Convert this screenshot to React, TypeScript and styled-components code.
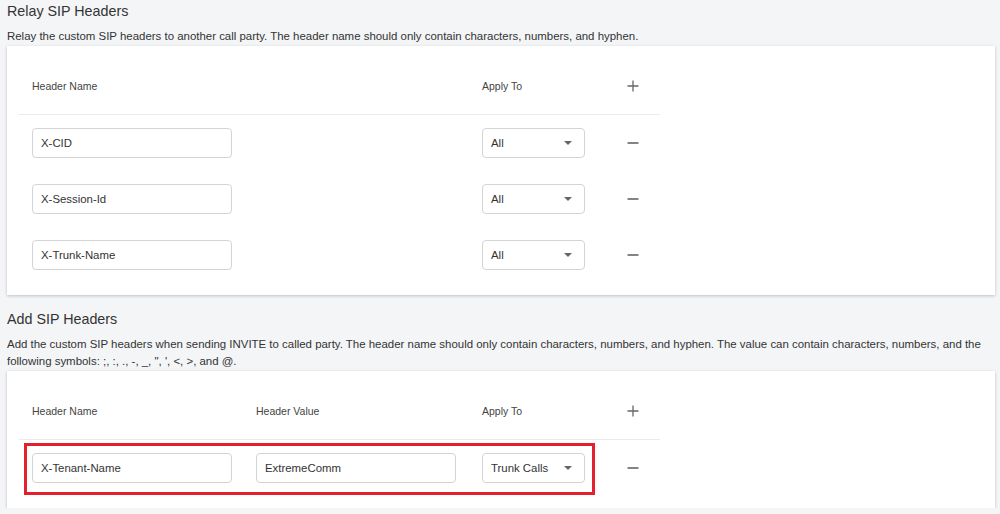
import styled, { createGlobalStyle } from 'styled-components';

const GlobalStyle = createGlobalStyle`
  body {
    margin: 0;
    background: #f4f5f7;
    font-family: "Liberation Sans", Arial, sans-serif;
    color: #333;
  }
`;

interface HeaderRow {
  name: string;
  value?: string;
  applyTo: string;
}

const relayRows: HeaderRow[] = [
  { name: 'X-CID', applyTo: 'All' },
  { name: 'X-Session-Id', applyTo: 'All' },
  { name: 'X-Trunk-Name', applyTo: 'All' },
];

const addRows: HeaderRow[] = [{ name: 'X-Tenant-Name', value: 'ExtremeComm', applyTo: 'Trunk Calls' }];

const PlusIcon = () => (
  <svg width="12" height="12" viewBox="0 0 12 12">
    <path d="M6 0.5v11M0.5 6h11" stroke="#666" strokeWidth="1.3" />
  </svg>
);

const MinusIcon = () => (
  <svg width="12" height="12" viewBox="0 0 12 12">
    <path d="M0.5 6h11" stroke="#666" strokeWidth="1.6" />
  </svg>
);

function HeaderTable({ rows, withValue, highlight }: { rows: HeaderRow[]; withValue?: boolean; highlight?: boolean }) {
  return (
    <Table>
      <HeadRow $withValue={withValue}>
        <ColLabel>Header Name</ColLabel>
        {withValue && <ColLabel>Header Value</ColLabel>}
        <ColLabel>Apply To</ColLabel>
        <Action>
          <PlusIcon />
        </Action>
      </HeadRow>
      {rows.map((row) => (
        <Row key={row.name} $withValue={withValue}>
          {highlight && <Highlight />}
          <Input>{row.name}</Input>
          {withValue && <Input>{row.value}</Input>}
          <Select>
            {row.applyTo}
            <Caret />
          </Select>
          <Action>
            <MinusIcon />
          </Action>
        </Row>
      ))}
    </Table>
  );
}

export default function App() {
  return (
    <>
      <GlobalStyle />
      <Page>
        <Section>
          <Title>Relay SIP Headers</Title>
          <Description>
            Relay the custom SIP headers to another call party. The header name should only contain characters,
            numbers, and hyphen.
          </Description>
          <Card>
            <HeaderTable rows={relayRows} />
          </Card>
        </Section>
        <Section $gap>
          <Title>Add SIP Headers</Title>
          <Description>
            Add the custom SIP headers when sending INVITE to called party. The header name should only contain
            characters, numbers, and hyphen. The value can contain characters, numbers, and the following symbols:
            ;, :, ., -, _, ", ', &lt;, &gt;, and @.
          </Description>
          <Card>
            <HeaderTable rows={addRows} withValue highlight />
          </Card>
        </Section>
      </Page>
    </>
  );
}

const Page = styled.div`
  padding: 0 5px 0 7px;
`;

const Section = styled.section<{ $gap?: boolean }>`
  margin-top: ${(p) => (p.$gap ? '13px' : '0')};
`;

const Title = styled.h2`
  margin: 0;
  font-size: 14.3px;
  font-weight: 400;
  line-height: 22px;
  color: #333;
`;

const Description = styled.p`
  margin: 6px 0 1px;
  font-size: 11.45px;
  line-height: 17px;
  color: #333;
`;

const Card = styled.div`
  background: #fff;
  box-shadow: 0 1px 3px rgba(0, 0, 0, 0.22);
  padding: 12px;
`;

const Table = styled.div`
  width: 641px;
`;

const Row = styled.div<{ $withValue?: boolean }>`
  position: relative;
  display: grid;
  grid-template-columns: ${(p) => (p.$withValue ? '224px 226px' : '450px')} 130px 42px;
  align-items: center;
  height: 56px;
  padding-left: 13px;
  box-sizing: border-box;
`;

const HeadRow = styled(Row)`
  height: 57px;
  border-bottom: 1px solid #ebebeb;
`;

const ColLabel = styled.div`
  font-size: 10.5px;
  color: #444;
`;

const Input = styled.div`
  width: 200px;
  height: 30px;
  box-sizing: border-box;
  border: 1px solid #d4d4d4;
  border-radius: 4px;
  padding: 0 8px;
  display: flex;
  align-items: center;
  font-size: 11.4px;
  color: #333;
`;

const Select = styled(Input)`
  width: 103px;
  justify-content: space-between;
  padding-right: 12px;
`;

const Caret = styled.span`
  width: 0;
  height: 0;
  border-left: 4px solid transparent;
  border-right: 4px solid transparent;
  border-top: 4px solid #666;
`;

const Action = styled.div`
  display: flex;
  justify-content: center;
  align-items: center;
`;

const Highlight = styled.div`
  position: absolute;
  left: 5px;
  top: 3px;
  width: 571px;
  height: 52px;
  box-sizing: border-box;
  border: 3px solid #e5202e;
  pointer-events: none;
`;
